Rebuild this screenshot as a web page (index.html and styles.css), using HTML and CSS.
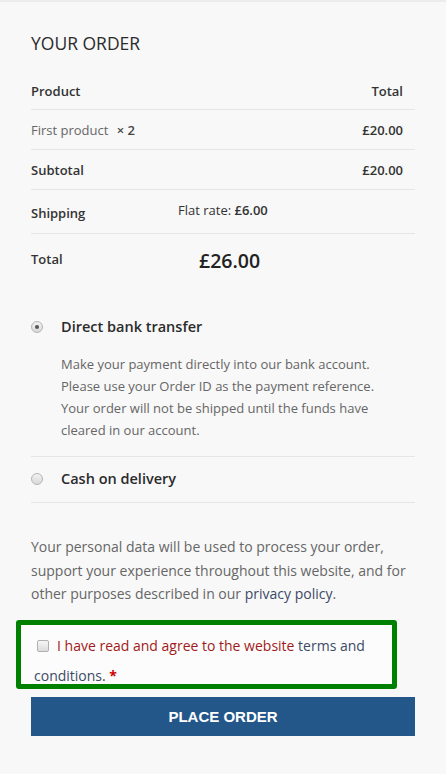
FILE: index.html
```html
<!DOCTYPE html>
<html lang="en">
<head>
    <meta charset="UTF-8">
    <meta name="viewport" content="width=device-width, initial-scale=1.0">
    <title>Your order</title>
    <link rel="stylesheet" href="styles.css">
</head>
<body>
    <div class="checkout">
        <h3 class="order-title">YOUR ORDER</h3>

        <div class="order-table">
            <div class="row row--head">
                <span class="label">Product</span>
                <span class="value">Total</span>
            </div>
            <div class="row row--item">
                <span class="label">First product <strong class="qty">&times; 2</strong></span>
                <span class="value">£20.00</span>
            </div>
            <div class="row row--sub">
                <span class="label">Subtotal</span>
                <span class="value">£20.00</span>
            </div>
            <div class="row row--ship">
                <span class="label">Shipping</span>
                <span class="ship-value">Flat rate: <b>£6.00</b></span>
            </div>
            <div class="row row--total">
                <span class="label">Total</span>
                <span class="total-value">£26.00</span>
            </div>
        </div>

        <ul class="methods">
            <li class="method">
                <label class="method-label"><span class="radio checked"></span>Direct bank transfer</label>
                <p class="method-desc">Make your payment directly into our bank account. Please use your Order ID as the payment reference. Your order will not be shipped until the funds have cleared in our account.</p>
            </li>
            <li class="method">
                <label class="method-label"><span class="radio"></span>Cash on delivery</label>
            </li>
        </ul>

        <p class="privacy">Your personal data will be used to process your order, support your experience throughout this website, and for other purposes described in our <a href="#" class="link">privacy policy</a>.</p>

        <div class="terms">
            <span class="checkbox"></span><span class="terms-text">I have read and agree to the website</span> <a href="#" class="link">terms and conditions</a>. <span class="required">*</span>
        </div>

        <button class="place-order">PLACE ORDER</button>
    </div>
</body>
</html>
```

FILE: styles.css
```css
body {
    margin: 0;
    background-color: #f8f8f8;
    border-top: 2px solid #ececec;
    font-family: "Open Sans", sans-serif;
    color: #333;
}

.checkout {
    padding: 29px 31px 30px 31px;
}

.order-title {
    margin: 0 0 17px 0;
    font-size: 17.5px;
    font-weight: 500;
    color: #2b2b2b;
    line-height: 24px;
}

.order-table {
    font-size: 13px;
}

.row {
    display: flex;
    justify-content: space-between;
    align-items: center;
    border-bottom: 1px solid #e6e6e6;
    padding: 0 12px 0 0;
}

.row .label {
    font-weight: 600;
    color: #333;
}

.row .value {
    font-weight: 600;
    color: #333;
}

.row--head {
    height: 37px;
}

.row--item {
    height: 39px;
}

.row--item .label {
    font-weight: 400;
    color: #666;
}

.row--item .qty {
    font-weight: 600;
    color: #444;
    margin-left: 5px;
}

.row--sub {
    height: 39px;
}

.row--ship {
    height: 43px;
    justify-content: flex-start;
}

.row--ship .label {
    width: 147px;
    padding-top: 3px;
}

.ship-value {
    font-size: 13px;
    color: #333;
    margin-top: -3px;
}

.ship-value b {
    font-weight: 600;
}

.row--total {
    height: 52px;
    justify-content: flex-start;
    border-bottom: none;
}

.row--total .label {
    width: 168px;
    padding-bottom: 2px;
}

.total-value {
    font-size: 19.5px;
    font-weight: 600;
    color: #222;
}

.methods {
    list-style: none;
    margin: 20px 0 0 0;
    padding: 0;
}

.method {
    border-bottom: 1px solid #e6e6e6;
    padding: 10px 0 15px 0;
}

.method + .method {
    padding-top: 11px;
    padding-bottom: 12px;
}

.method-label {
    display: flex;
    align-items: center;
    font-size: 14.5px;
    font-weight: 600;
    color: #2b2b2b;
    line-height: 22px;
}

.radio {
    width: 10px;
    height: 10px;
    border-radius: 50%;
    border: 1px solid #b5b5b5;
    background: linear-gradient(#f2f2f2, #d9d9d9);
    margin: 0 18px 0 0;
    position: relative;
}

.radio.checked::after {
    content: "";
    position: absolute;
    left: 3px;
    top: 3px;
    width: 4px;
    height: 4px;
    border-radius: 50%;
    background: #555;
}

.method-desc {
    width: 320px;
    margin: 15px 0 0 30px;
    font-size: 13px;
    line-height: 22px;
    color: #666;
}

.privacy {
    margin: 32px 0 0 0;
    font-size: 14px;
    line-height: 23.5px;
    color: #666;
}

.link {
    color: #3b4a66;
    text-decoration: none;
}

.terms {
    height: 53px;
    margin: 14px 18px 0 -15px;
    border: 5px solid #008000;
    border-radius: 3px;
    background-color: #fcfcfc;
    padding: 6px 10px 0 13px;
    font-size: 14px;
    line-height: 30px;
    color: #444;
}

.checkbox {
    display: inline-block;
    width: 10px;
    height: 10px;
    border: 1px solid #b0b0b0;
    border-radius: 2px;
    background: linear-gradient(#f6f6f6, #dcdcdc);
    margin: 0 8px 0 3px;
    vertical-align: -1px;
}

.terms-text {
    color: #a11a1a;
}

.required {
    color: #c00;
    font-weight: 700;
}

.place-order {
    display: block;
    width: 100%;
    height: 39px;
    margin-top: 8px;
    border: none;
    background-color: #235789;
    color: #fff;
    font-family: "Liberation Sans", Arial, sans-serif;
    font-size: 15px;
    font-weight: 700;
    cursor: pointer;
}
```
